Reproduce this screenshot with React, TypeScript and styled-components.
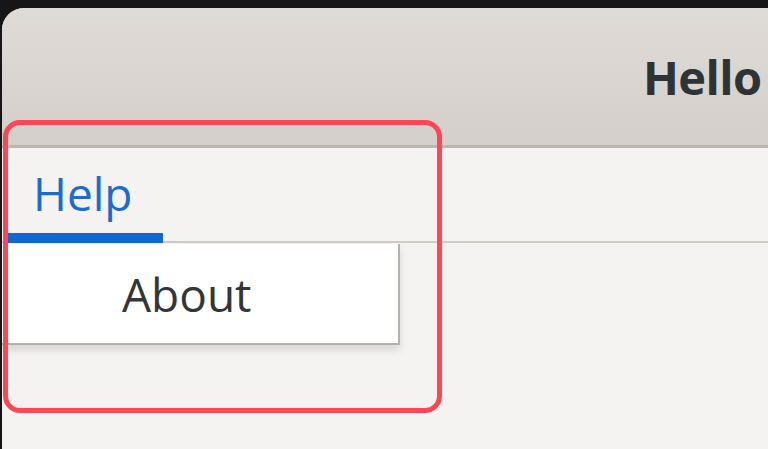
import React from 'react';
import styled, { createGlobalStyle } from 'styled-components';

const GlobalStyle = createGlobalStyle`
	html,
	body {
		margin: 0;
		padding: 0;
		background: #161616;
		overflow: hidden;
	}
	#root {
		height: 449px;
	}
`;

const Window = styled.div`
	position: relative;
	box-sizing: border-box;
	height: 441px;
	margin: 8px 0 0 2px;
	border-top-left-radius: 22px;
	overflow: hidden;
	background: #f4f3f1;
	font-family: 'Open Sans', 'DejaVu Sans', sans-serif;
	display: flex;
	flex-direction: column;
`;

const HeaderBar = styled.header`
	flex: 0 0 137px;
	display: flex;
	align-items: center;
	padding-left: 641px;
	background: linear-gradient(to bottom, #dfdbd7, #d4cfca);
	border-bottom: 3px solid #bcb6b0;
	white-space: nowrap;
`;

const Title = styled.h1`
	margin: 0;
	font-size: 47px;
	font-weight: 700;
	color: #2e3436;
	letter-spacing: -0.6px;
`;

const MenuBar = styled.nav`
	flex: 0 0 auto;
	display: flex;
	align-items: flex-end;
	height: 93px;
	border-bottom: 2px solid #cfcbc7;
`;

const MenuItem = styled.div<{ $open?: boolean }>`
	box-sizing: border-box;
	width: 157px;
	margin-left: 4px;
	margin-bottom: -2px;
	padding: 0 0 10px 27px;
	font-size: 46px;
	line-height: 60px;
	color: ${({ $open }) => ($open ? '#1c6ccb' : '#2e3436')};
	border-bottom: 10px solid ${({ $open }) => ($open ? '#1467cf' : 'transparent')};
`;

const Popup = styled.div`
	position: absolute;
	top: 236px;
	left: -2px;
	box-sizing: border-box;
	width: 400px;
	height: 101px;
	display: flex;
	align-items: center;
	padding-left: 120px;
	background: #ffffff;
	border: 2px solid #b4b0ac;
	border-top: none;
	box-shadow: 0 5px 8px rgba(0, 0, 0, 0.12);
`;

const PopupItem = styled.div`
	font-size: 46px;
	color: #333638;
`;

const Highlight = styled.div`
	position: absolute;
	top: 112px;
	left: 1px;
	width: 439px;
	height: 293px;
	box-sizing: border-box;
	border: 5px solid #ff4654;
	border-radius: 17px;
	pointer-events: none;
`;

const App = () => {
	return (
		<>
			<GlobalStyle />
			<Window>
				<HeaderBar>
					<Title>Hello</Title>
				</HeaderBar>
				<MenuBar>
					<MenuItem $open>Help</MenuItem>
				</MenuBar>
				<Popup>
					<PopupItem>About</PopupItem>
				</Popup>
				<Highlight />
			</Window>
		</>
	);
};

export default App;
